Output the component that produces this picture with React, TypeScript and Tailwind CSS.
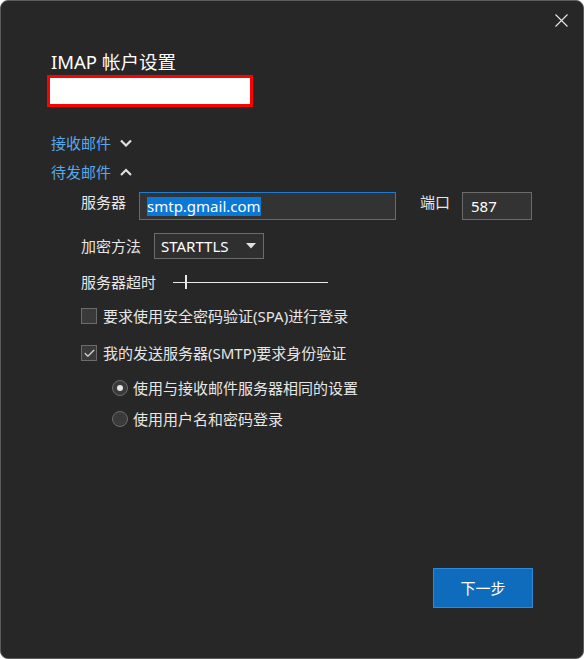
import { Check } from "lucide-react";

const font = { fontFamily: '"Noto Sans", "Noto Sans CJK SC", sans-serif' };

function Chevron({ up }: { up?: boolean }) {
  return (
    <svg width="12" height="8" viewBox="0 0 12 8" fill="none" stroke="#e0e0e0" strokeWidth="2.2">
      <path d={up ? "M1 7 L6 2 L11 7" : "M1 1.5 L6 6.5 L11 1.5"} />
    </svg>
  );
}

function Checkbox({ checked, label }: { checked?: boolean; label: string }) {
  return (
    <div className="flex h-[20px] items-center gap-[6px]">
      <span className="flex h-[16px] w-[16px] items-center justify-center border border-[#6b6b6b] bg-[#3a3a3a]">
        {checked && <Check className="h-[13px] w-[13px] text-[#d8d8d8]" strokeWidth={2.2} />}
      </span>
      <span className="text-[15px] leading-[20px] text-[#e6e6e6]">{label}</span>
    </div>
  );
}

function Radio({ checked, label }: { checked?: boolean; label: string }) {
  return (
    <div className="flex h-[20px] items-center gap-[5px]">
      <span className="flex h-[16px] w-[16px] items-center justify-center rounded-full border border-[#6b6b6b] bg-[#3a3a3a]">
        {checked && <span className="h-[6px] w-[6px] rounded-full bg-[#e8e8e8]" />}
      </span>
      <span className="text-[15px] leading-[20px] text-[#e6e6e6]">{label}</span>
    </div>
  );
}

export default function App() {
  return (
    <div
      style={font}
      className="relative flex h-[659px] w-[584px] flex-col overflow-hidden rounded-[8px] border border-[#5c5c5c] bg-[#272727]"
    >
      <button className="absolute right-[15px] top-[12px] flex h-[14px] w-[14px] items-center justify-center">
        <svg width="13" height="13" viewBox="0 0 13 13" fill="none" stroke="#e8e8e8" strokeWidth="1.1">
          <path d="M0.5 0.5 L12.5 12.5 M12.5 0.5 L0.5 12.5" />
        </svg>
      </button>

      <div className="pl-[50px] pt-[49px]">
        <h1 className="text-[18.5px] leading-[24px] font-normal text-white">IMAP 帐户设置</h1>
        <div className="ml-[-4px] mt-[1px] h-[32px] w-[206px] border-[3px] border-[#ff0000] bg-white" />

        <div className="mt-[26px] flex h-[20px] items-center gap-[9px] text-[15px] leading-[20px] text-[#5aa8ea]">
          接收邮件
          <Chevron />
        </div>
        <div className="mt-[9px] flex h-[20px] items-center gap-[9px] text-[15px] leading-[20px] text-[#5aa8ea]">
          待发邮件
          <Chevron up />
        </div>

        <div className="pl-[30px] text-[15px] text-[#e6e6e6]">
          <div className="mt-[10px] flex items-start">
            <span className="w-[58px] leading-[20px]">服务器</span>
            <div className="flex h-[28px] w-[257px] items-center border border-[#1a7fd4] bg-[#333333] pl-[7px]">
              <span className="bg-[#0a78d6] leading-[19px] text-white">smtp.gmail.com</span>
            </div>
            <span className="ml-[24px] w-[42px] leading-[20px]">端口</span>
            <div className="flex h-[28px] w-[70px] items-center border border-[#6b6b6b] bg-[#333333] pl-[8px] text-white">
              587
            </div>
          </div>

          <div className="mt-[13px] flex items-center">
            <span className="w-[73px] leading-[20px]">加密方法</span>
            <div className="flex h-[26px] w-[110px] items-center justify-between border border-[#6b6b6b] bg-[#2f2f2f] pl-[6px] pr-[7px]">
              <span className="leading-[20px] text-white">STARTTLS</span>
              <svg width="10" height="6" viewBox="0 0 10 6">
                <path d="M0 0 H10 L5 5.5 Z" fill="#e0e0e0" />
              </svg>
            </div>
          </div>

          <div className="mt-[13px] flex h-[20px] items-center">
            <span className="w-[92px] leading-[20px]">服务器超时</span>
            <div className="relative flex h-[14px] w-[155px] items-center">
              <div className="h-[1px] w-full bg-[#e8e8e8]" />
              <div className="absolute left-[12px] top-0 h-[14px] w-[2px] bg-[#e8e8e8]" />
            </div>
          </div>

          <div className="mt-[14px]">
            <Checkbox label="要求使用安全密码验证(SPA)进行登录" />
          </div>
          <div className="mt-[17px]">
            <Checkbox checked label="我的发送服务器(SMTP)要求身份验证" />
          </div>

          <div className="pl-[31px]">
            <div className="mt-[15px]">
              <Radio checked label="使用与接收邮件服务器相同的设置" />
            </div>
            <div className="mt-[11px]">
              <Radio label="使用用户名和密码登录" />
            </div>
          </div>
        </div>
      </div>

      <div className="mt-auto flex justify-end pb-[50px] pr-[50px]">
        <button className="h-[40px] w-[100px] border border-[#2d8ad8] bg-[#0f6cbd] text-[15px] text-white">
          下一步
        </button>
      </div>
    </div>
  );
}
